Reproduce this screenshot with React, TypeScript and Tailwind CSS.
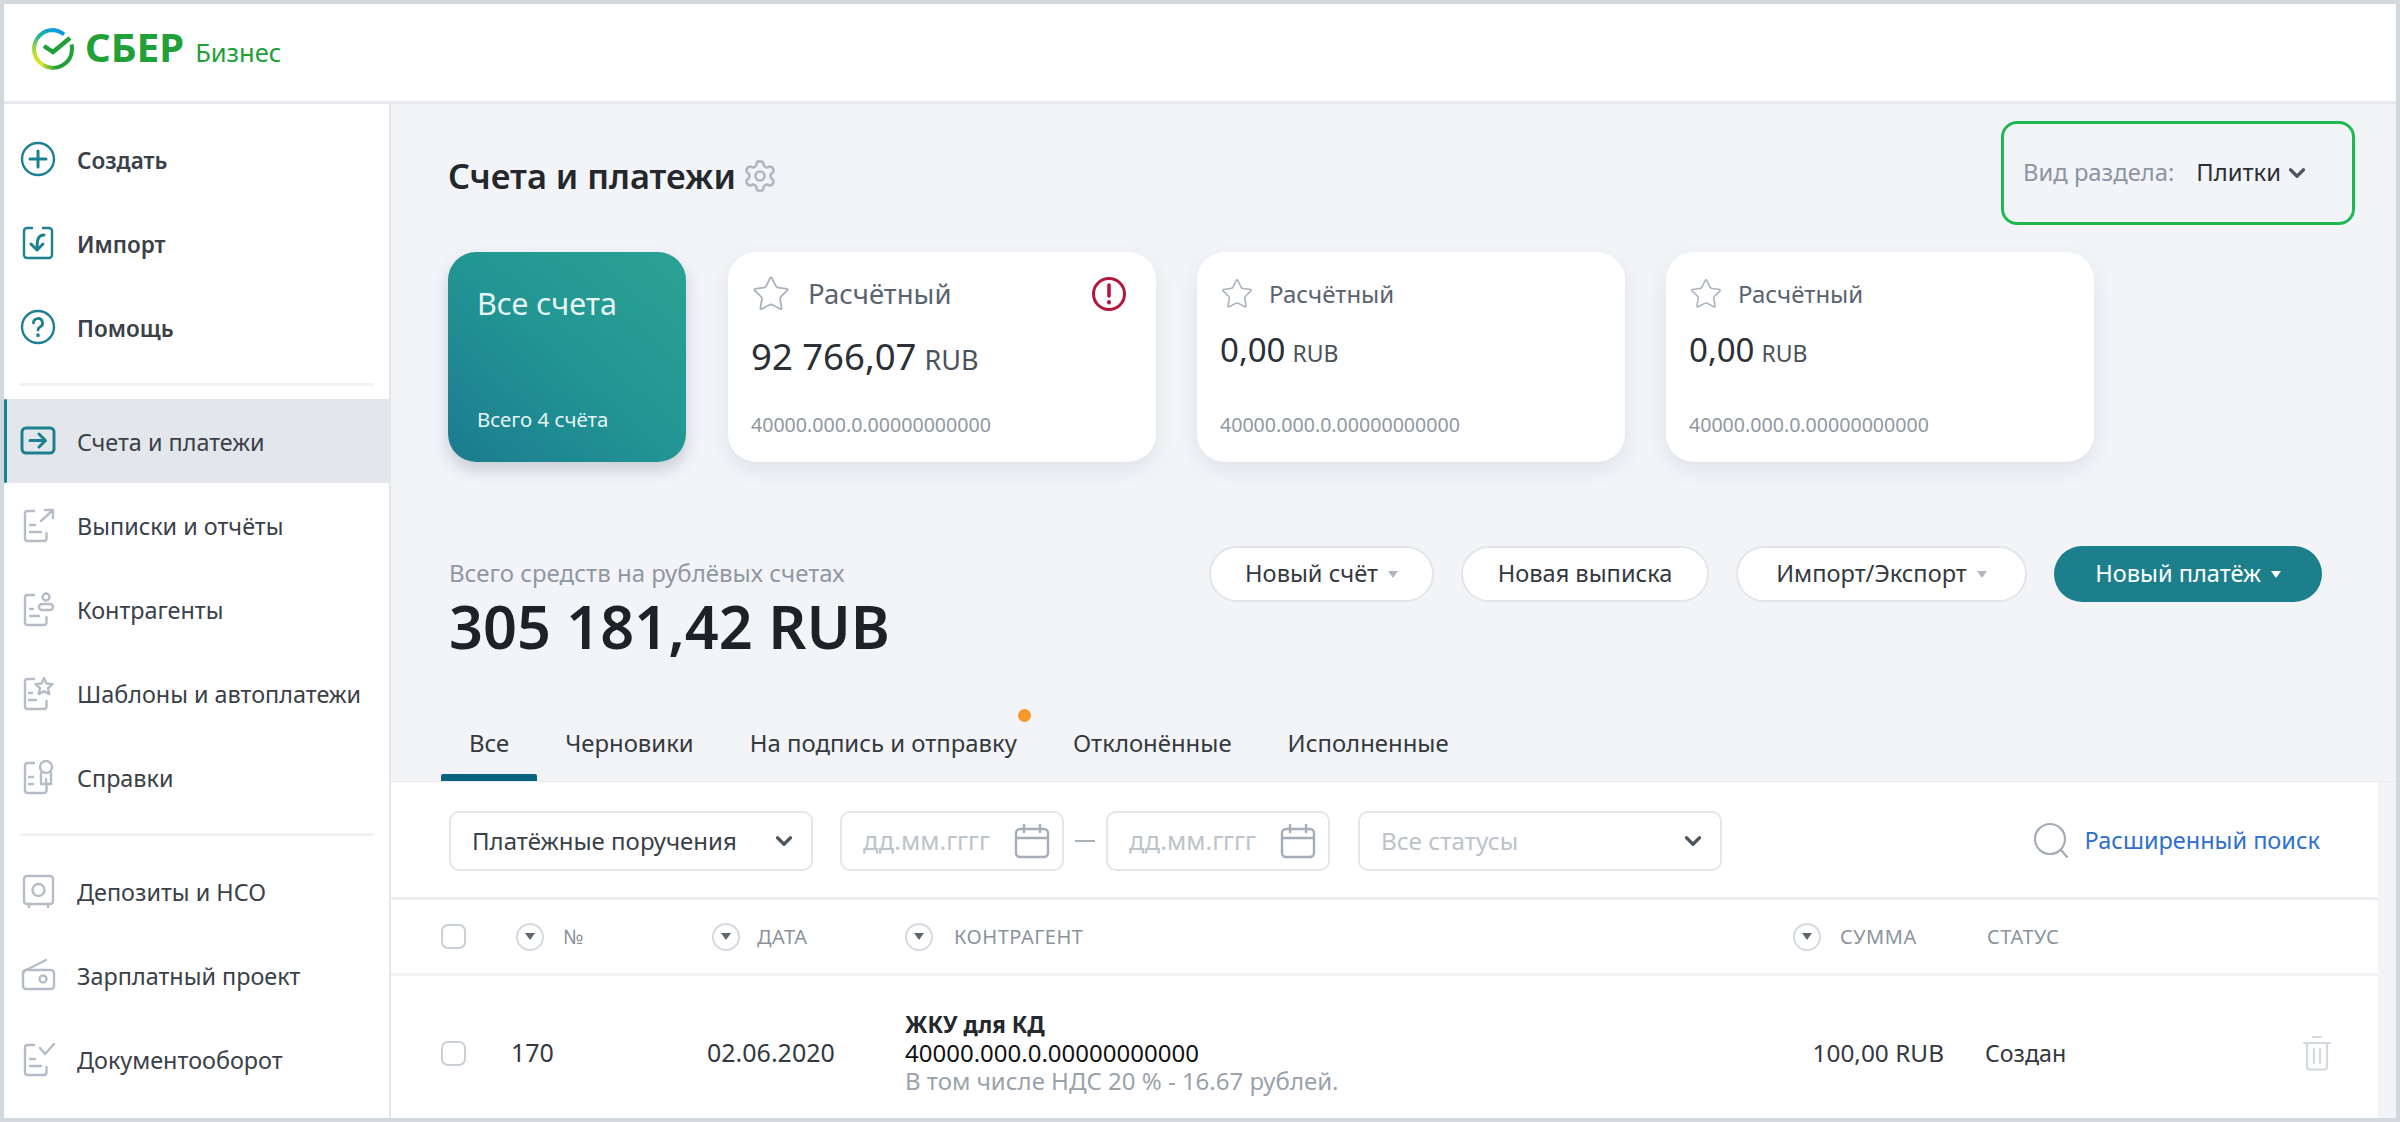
import { Star, ChevronDown, Settings } from "lucide-react"

const font = { fontFamily: '"Noto Sans", "Open Sans", sans-serif' }

function Ic({ children, color = "#b4bdc7" }: { children: React.ReactNode; color?: string }) {
  return (
    <svg width="36" height="36" viewBox="0 0 36 36" fill="none" stroke={color} strokeWidth="2.4" strokeLinecap="round" strokeLinejoin="round" className="shrink-0">
      {children}
    </svg>
  )
}

const docBase = "M14 4H7.5A2.5 2.5 0 0 0 5 6.5v25A2.5 2.5 0 0 0 7.5 34H24a2.5 2.5 0 0 0 2.5-2.5V26"

const icons: Record<string, React.ReactNode> = {
  create: <Ic color="#1d8090"><circle cx="18" cy="18" r="16" /><path d="M18 10v16M10 18h16" strokeWidth="3" /></Ic>,
  import: <Ic color="#1d8090"><path d="M12 3H7a3 3 0 0 0-3 3v24a3 3 0 0 0 3 3h22a3 3 0 0 0 3-3V6a3 3 0 0 0-3-3h-6" /><path d="M24 10c-6 0-7 5-7 14" strokeWidth="3" /><path d="M11 19l6 6 6-6" strokeWidth="3" /></Ic>,
  help: <Ic color="#1d8090"><circle cx="18" cy="18" r="16" /><path d="M13.5 14a4.5 4.5 0 1 1 6.5 4c-1.400.7-2 1.500-2 3" strokeWidth="2.8" /><path d="M18 26v.5" strokeWidth="3.400" /></Ic>,
  accounts: <Ic color="#1d8090"><rect x="2" y="5" width="32" height="25" rx="4" strokeWidth="3" /><path d="M10 17.500h15M19 11l6.500 6.500L19 24" strokeWidth="3" /></Ic>,
  reports: <Ic><path d={docBase} /><path d="M10 18h5M10 25h11M21 14L33 3M25 3h8v8" /></Ic>,
  contractors: <Ic><path d={docBase} /><path d="M10 18h3M10 25h9" /><circle cx="26" cy="6" r="3.500" /><rect x="19" y="13" width="14" height="6" rx="3" /></Ic>,
  templates: <Ic><path d={docBase} /><path d="M9 18h3M9 25h7" /><path d="M24 3l2.500 5.500 6 .6-4.500 4 1.300 6-5.300-3-5.300 3 1.300-6-4.500-4 6-.6z" /></Ic>,
  certificates: <Ic><path d={docBase} /><path d="M9 18h4M9 25h4" /><circle cx="26" cy="8" r="6" /><path d="M21 14v11h10V14M26 20v5" /></Ic>,
  deposits: <Ic><rect x="4" y="3" width="29" height="28" rx="3" /><circle cx="18.500" cy="17" r="6" /><path d="M9 31v3M28 31v3" /></Ic>,
  salary: <Ic><path d="M3 17c0-2 1-3 3-4L26 3" /><rect x="3" y="13" width="31" height="19" rx="3" /><circle cx="23" cy="22" r="3.500" /></Ic>,
  docflow: <Ic><path d={docBase} /><path d="M10 18h5M10 25h11M20 7l5 6 9-10" /></Ic>,
}

const topItems = [
  { icon: "create", label: "Создать" },
  { icon: "import", label: "Импорт" },
  { icon: "help", label: "Помощь" },
]

const midItems = [
  { icon: "accounts", label: "Счета и платежи", active: true },
  { icon: "reports", label: "Выписки и отчёты" },
  { icon: "contractors", label: "Контрагенты" },
  { icon: "templates", label: "Шаблоны и автоплатежи" },
  { icon: "certificates", label: "Справки" },
]

const bottomItems = [
  { icon: "deposits", label: "Депозиты и НСО" },
  { icon: "salary", label: "Зарплатный проект" },
  { icon: "docflow", label: "Документооборот" },
]

function NavItem({ icon, label, bold, active }: { icon: string; label: string; bold?: boolean; active?: boolean }) {
  return (
    <div className={`relative flex h-[84px] items-center gap-[21px] pl-[16px] text-[#3a4149] ${bold ? "text-[22.5px] font-semibold" : "text-[23.4px]"} ${active ? "bg-[#e3e6ea]" : ""}`}>
      {active && <div className="absolute left-0 top-0 h-full w-[3px] rounded-full bg-[#1d8090]" />}
      {icons[icon]}
      <span className="mt-[3px]">{label}</span>
    </div>
  )
}

function Logo() {
  return (
    <svg width="44" height="44" viewBox="0 0 44 44" fill="none" className="shrink-0">
      <defs>
        <linearGradient id="ring" x1="4" y1="36" x2="30" y2="4" gradientUnits="userSpaceOnUse">
          <stop offset="0" stopColor="#f2e913" />
          <stop offset="0.3" stopColor="#8fd14f" />
          <stop offset="0.6" stopColor="#18b2a0" />
          <stop offset="1" stopColor="#0797e8" />
        </linearGradient>
        <linearGradient id="ring2" x1="10" y1="40" x2="40" y2="24" gradientUnits="userSpaceOnUse">
          <stop offset="0" stopColor="#d6e32a" />
          <stop offset="0.4" stopColor="#21a038" />
          <stop offset="1" stopColor="#21a038" />
        </linearGradient>
      </defs>
      <path d="M33 7.500A19 19 0 0 0 22 3 19 19 0 0 0 3 22a19 19 0 0 0 9 16" stroke="url(#ring)" strokeWidth="4" />
      <path d="M12 38a19 19 0 0 0 29-16c0-1.500-.2-3-.5-4.500" stroke="url(#ring2)" strokeWidth="4" />
      <path d="M13 19l9 6L39 11" stroke="#21a038" strokeWidth="4.500" />
    </svg>
  )
}

function AccountCard({ big, amount }: { big?: boolean; amount: string }) {
  return (
    <div className="flex h-[210px] w-[428px] flex-col rounded-[28px] bg-white pl-[23px] pr-[30px] shadow-[0_8px_20px_rgba(60,75,95,0.10)]">
      <div className="mt-[22px] flex h-[40px] items-center">
        <Star size={big ? 40 : 34} strokeWidth={1.100} className="text-[#a9b2bd]" />
        <span className={`text-[#5a6470] ${big ? "ml-[17px] text-[27.5px]" : "ml-[15px] text-[24px]"}`}>Расчётный</span>
        {big && (
          <svg width="36" height="36" viewBox="0 0 36 36" fill="none" stroke="#b5173d" strokeWidth="3" strokeLinecap="round" className="ml-auto mr-[-1px]">
            <circle cx="18" cy="18" r="15.500" />
            <path d="M18 9v11" strokeWidth="3.600" />
            <path d="M18 26v.5" strokeWidth="4" />
          </svg>
        )}
      </div>
      <div className={`flex items-baseline text-[#2b3036] ${big ? "mt-[15px] h-[50px] text-[36.5px]" : "mt-[11px] h-[46px] text-[33px]"}`}>
        {amount}
        <span className={`text-[#4a525b] ${big ? "ml-[8px] text-[27px]" : "ml-[7px] text-[23px]"}`}>RUB</span>
      </div>
      <div className="mt-auto mb-[23px] text-[19.6px] text-[#8f98a2]">40000.000.0.00000000000</div>
    </div>
  )
}

function PillButton({ label, arrow, primary }: { label: string; arrow?: boolean; primary?: boolean }) {
  return (
    <div className={`flex h-[56px] items-center justify-center gap-[10px] rounded-full text-[23.6px] ${primary ? "bg-[#1d7f8c] text-white" : "border-2 border-[#e2e5ea] bg-white text-[#33393f]"}`}>
      <span>{label}</span>
      {arrow && <span className={`h-0 w-0 border-x-[5px] border-t-[7px] border-x-transparent ${primary ? "border-t-white" : "border-t-[#b0b7c0]"}`} />}
    </div>
  )
}

function Calendar() {
  return (
    <svg width="36" height="36" viewBox="0 0 36 36" fill="none" stroke="#a4adb8" strokeWidth="2.400" strokeLinecap="round" className="shrink-0">
      <rect x="2" y="6" width="32" height="28" rx="4" />
      <path d="M2 15h32M10 2v7M26 2v7" />
    </svg>
  )
}

function DateInput() {
  return (
    <div className="flex h-[60px] w-[224px] items-center justify-between rounded-[10px] border-2 border-[#e3e6ea] bg-white pl-[21px] pr-[12px] text-[25px] text-[#bcc3cb]">
      <span>дд.мм.гггг</span>
      <Calendar />
    </div>
  )
}

function SortIcon() {
  return (
    <span className="flex h-[28px] w-[28px] shrink-0 items-center justify-center rounded-full border-2 border-[#d5dae0]">
      <span className="h-0 w-0 border-x-[5px] border-t-[7px] border-x-transparent border-t-[#5c6670]" />
    </span>
  )
}

function Checkbox() {
  return <span className="block h-[25px] w-[25px] rounded-[7px] border-2 border-[#c9cfd6] bg-white" />
}

function HeadLabel({ children }: { children: React.ReactNode }) {
  return <span className="text-[20px] uppercase tracking-[0.5px] text-[#8a939d]">{children}</span>
}

export default function App() {
  return (
    <div style={font} className="box-border flex h-[1122px] w-[2400px] flex-col overflow-hidden border-4 border-[#d1d9df] bg-white">
      <header className="box-border flex h-[100px] shrink-0 items-center border-b-[3px] border-[#e7eaee] bg-white pb-[8px] pl-[27px]">
        <Logo />
        <span className="mb-[4px] ml-[10px] text-[40px] font-bold leading-none text-[#21a038]">СБЕР</span>
        <span className="ml-[11px] mt-[8px] text-[25.5px] leading-none text-[#21a038]">Бизнес</span>
      </header>

      <div className="flex min-h-0 flex-1">
        <aside className="box-border w-[387px] shrink-0 border-r-2 border-[#e3e6ea] bg-white pt-[13px]">
          {topItems.map((it) => <NavItem key={it.label} {...it} bold />)}
          <div className="mx-[16px] mt-[14px] mb-[13px] h-[3px] bg-[#f1f2f4]" />
          {midItems.map((it) => <NavItem key={it.label} {...it} />)}
          <div className="mx-[16px] mt-[14px] mb-[13px] h-[3px] bg-[#f1f2f4]" />
          {bottomItems.map((it) => <NavItem key={it.label} {...it} />)}
        </aside>

        <main className="flex min-w-0 flex-1 flex-col bg-[#f2f4f8]">
          <div className="flex justify-between pl-[57px] pr-[41px] pt-[17px]">
            <div className="flex h-[104px] items-center gap-[6px]">
              <h1 className="mt-[6px] text-[34.4px] font-semibold text-[#24282d]">Счета и платежи</h1>
              <Settings size={36} strokeWidth={1.800} className="mt-[6px] text-[#b0b8c0]" />
            </div>
            <div className="box-border flex h-[104px] w-[354px] items-center rounded-[16px] border-[3px] border-[#1fb852] pl-[19px] text-[23.8px]">
              <span className="text-[#8c95a0]">Вид раздела:</span>
              <span className="ml-[22px] text-[#2b3036]">Плитки</span>
              <ChevronDown size={26} strokeWidth={3} className="ml-[3px] text-[#4e5761]" />
            </div>
          </div>

          <div className="mt-[27px] flex gap-[41px] pl-[57px]">
            <div className="mr-[1px] flex h-[210px] w-[238px] flex-col rounded-[28px] bg-gradient-to-tr from-[#1b7b8f] via-[#229594] to-[#2ba293] pl-[29px] text-[#e6f5f2] shadow-[0_8px_16px_rgba(50,70,90,0.22)]">
              <span className="mt-[29px] text-[30.5px]">Все счета</span>
              <span className="mt-auto mb-[27px] text-[20.4px]">Всего 4 счёта</span>
            </div>
            <AccountCard big amount="92 766,07" />
            <AccountCard amount="0,00" />
            <AccountCard amount="0,00" />
          </div>

          <div className="mt-[84px] flex h-[155px] justify-between pl-[58px] pr-[74px]">
            <div>
              <div className="mt-[11px] text-[24px] leading-[32px] text-[#8f98a2]">Всего средств на рублёвых счетах</div>
              <div className="mt-[1px] text-[59.4px] font-semibold leading-[72px] text-[#1e2125]">305 181,42 RUB</div>
            </div>
            <div className="flex gap-[27px]">
              <div className="w-[225px]"><PillButton label="Новый счёт" arrow /></div>
              <div className="w-[248px]"><PillButton label="Новая выписка" /></div>
              <div className="w-[291px]"><PillButton label="Импорт/Экспорт" arrow /></div>
              <div className="w-[268px]"><PillButton label="Новый платёж" arrow primary /></div>
            </div>
          </div>

          <div className="flex h-[81px] border-b-[1px] border-[#e9ebef] pl-[50px] text-[23.9px] text-[#343a40]">
            <div className="relative flex items-center px-[28px] pt-[3px]">Все<div className="absolute bottom-0 left-0 h-[7px] w-full rounded-t-[2px] bg-[#0b627f]" /></div>
            <div className="flex items-center px-[28px] pt-[3px]">Черновики</div>
            <div className="relative flex items-center px-[28px] pt-[3px]">На подпись и отправку<div className="absolute right-[14px] top-[8px] h-[13px] w-[13px] rounded-full bg-[#f7982a]" /></div>
            <div className="flex items-center px-[28px] pt-[3px]">Отклонённые</div>
            <div className="flex items-center px-[28px] pt-[3px]">Исполненные</div>
          </div>

          <div className="mr-[18px] flex min-h-0 flex-1 flex-col bg-white">
            <div className="flex h-[118px] shrink-0 items-start justify-between border-b-[3px] border-[#eceef1] pl-[58px] pr-[58px] pt-[29px]">
              <div className="flex items-center">
                <div className="flex h-[60px] w-[364px] items-center justify-between rounded-[10px] border-2 border-[#e3e6ea] pl-[21px] pr-[14px] text-[24px] text-[#3a4149]">
                  <span>Платёжные поручения</span>
                  <ChevronDown size={26} strokeWidth={3} className="text-[#4e5761]" />
                </div>
                <div className="ml-[27px]"><DateInput /></div>
                <div className="mx-[11px] h-[2px] w-[20px] bg-[#a9b2bb]" />
                <DateInput />
                <div className="ml-[28px] flex h-[60px] w-[364px] items-center justify-between rounded-[10px] border-2 border-[#e3e6ea] pl-[21px] pr-[14px] text-[24.3px] text-[#bcc3cb]">
                  <span>Все статусы</span>
                  <ChevronDown size={26} strokeWidth={3} className="text-[#4e5761]" />
                </div>
              </div>
              <div className="flex h-[60px] items-center gap-[14px] text-[23.5px] text-[#2f6fce]">
                <svg width="38" height="38" viewBox="0 0 38 38" fill="none" stroke="#a4adb8" strokeWidth="2.200" strokeLinecap="round" className="shrink-0">
                  <circle cx="17" cy="17" r="15" />
                  <path d="M28 28l6 7" />
                </svg>
                <span>Расширенный поиск</span>
              </div>
            </div>

            <div className="grid h-[76px] shrink-0 grid-cols-[70px_196px_198px_880px_200px_1fr] items-center border-b-[3px] border-[#f0f2f5] pl-[50px]">
              <Checkbox />
              <div className="flex items-center gap-[19px] pl-[5px]"><SortIcon /><HeadLabel>№</HeadLabel></div>
              <div className="flex items-center gap-[17px] pl-[5px]"><SortIcon /><HeadLabel>Дата</HeadLabel></div>
              <div className="flex items-center gap-[21px]"><SortIcon /><HeadLabel>Контрагент</HeadLabel></div>
              <div className="flex items-center gap-[19px] pl-[8px]"><SortIcon /><HeadLabel>Сумма</HeadLabel></div>
              <div className="pl-[2px]"><HeadLabel>Статус</HeadLabel></div>
            </div>

            <div className="grid flex-1 grid-cols-[70px_196px_198px_880px_200px_300px_64px] items-center pl-[50px] pt-[12px] text-[25px] text-[#33393f]">
              <Checkbox />
              <div>170</div>
              <div>02.06.2020</div>
              <div className="whitespace-nowrap text-[24px] leading-[28px]">
                <div className="text-[22.5px] font-bold text-[#24282d]">ЖКУ для КД</div>
                <div className="text-[#111]">40000.000.0.00000000000</div>
                <div className="text-[#9aa2ab]">В том числе НДС 20 % - 16.67 рублей.</div>
              </div>
              <div className="whitespace-nowrap pr-[41px] text-right text-[24.4px]">100,00 RUB</div>
              <div className="text-[23.2px]">Создан</div>
              <div className="flex justify-center">
                <svg width="30" height="36" viewBox="0 0 30 36" fill="none" stroke="#d3d9df" strokeWidth="2.200" strokeLinecap="round">
                  <path d="M2 8h26M11 2h8M5 8v24a2.500 2.500 0 0 0 2.500 2.500h15A2.500 2.500 0 0 0 25 32V8M12 14v14M18 14v14" />
                </svg>
              </div>
            </div>
          </div>
        </main>
      </div>
    </div>
  )
}
